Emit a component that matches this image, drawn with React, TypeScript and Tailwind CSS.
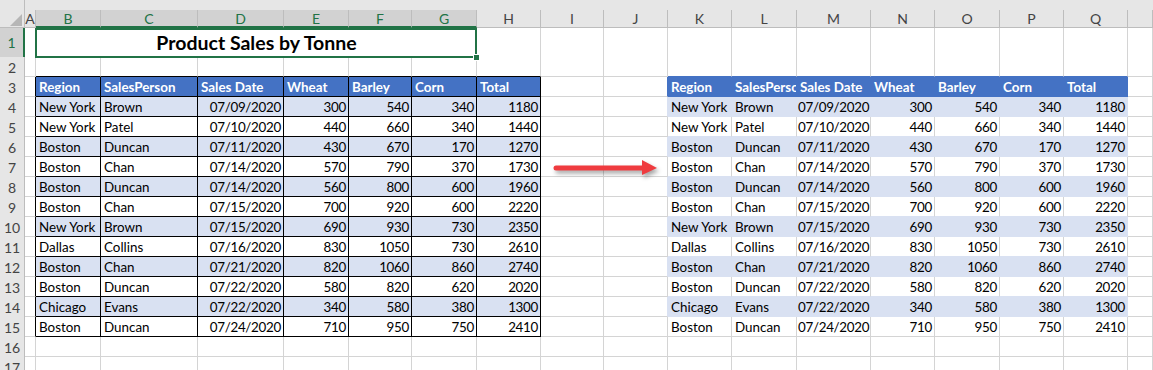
import React from 'react';

const GRID =
  'grid grid-cols-[25px_11px_65px_97px_86px_65px_63px_65px_64px_63px_64px_64px_65px_74px_64px_65px_64px_64px_25px]';

const LETTERS = ['A', 'B', 'C', 'D', 'E', 'F', 'G', 'H', 'I', 'J', 'K', 'L', 'M', 'N', 'O', 'P', 'Q', ''];

const HEAD = ['Region', 'SalesPerson', 'Sales Date', 'Wheat', 'Barley', 'Corn', 'Total'];

const DATA: (string | number)[][] = [
  ['New York', 'Brown', '07/09/2020', 300, 540, 340, 1180],
  ['New York', 'Patel', '07/10/2020', 440, 660, 340, 1440],
  ['Boston', 'Duncan', '07/11/2020', 430, 670, 170, 1270],
  ['Boston', 'Chan', '07/14/2020', 570, 790, 370, 1730],
  ['Boston', 'Duncan', '07/14/2020', 560, 800, 600, 1960],
  ['Boston', 'Chan', '07/15/2020', 700, 920, 600, 2220],
  ['New York', 'Brown', '07/15/2020', 690, 930, 730, 2350],
  ['Dallas', 'Collins', '07/16/2020', 830, 1050, 730, 2610],
  ['Boston', 'Chan', '07/21/2020', 820, 1060, 860, 2740],
  ['Boston', 'Duncan', '07/22/2020', 580, 820, 620, 2020],
  ['Chicago', 'Evans', '07/22/2020', 340, 580, 380, 1300],
  ['Boston', 'Duncan', '07/24/2020', 710, 950, 750, 2410],
];

const GRIDLINE = '#d4d4d4';
const HEAD_FILL = '#4472c4';
const BAND_FILL = '#d9e1f2';

// table column offset: left table starts at B (1), right one at K (10)
const tableCol = (c: number) => (c >= 1 && c <= 7 ? c - 1 : c >= 10 && c <= 16 ? c - 10 : -1);
const inTable = (r: number, c: number) => r >= 3 && r <= 15 && tableCol(c) >= 0;
const inLeft = (r: number, c: number) => r >= 3 && r <= 15 && c >= 1 && c <= 7;

const fillOf = (r: number, c: number): string | null => {
  if (!inTable(r, c)) return null;
  if (r === 3) return HEAD_FILL;
  return r % 2 === 0 ? BAND_FILL : null;
};

const valueOf = (r: number, c: number): string | number | null => {
  if (!inTable(r, c)) return null;
  const tc = tableCol(c);
  if (r === 3) return HEAD[tc];
  return DATA[r - 4][tc];
};

function Cell({ r, c }: { r: number; c: number }) {
  const fill = fillOf(r, c);
  const value = valueOf(r, c);

  let right = GRIDLINE;
  if (inLeft(r, c) || inLeft(r, c + 1)) right = '#000';
  else if (fill) right = fill;
  else if (fillOf(r, c + 1)) right = fillOf(r, c + 1)!;

  let bottom = GRIDLINE;
  if (inLeft(r, c) || inLeft(r + 1, c)) bottom = '#000';
  else if (fill) bottom = fill;
  else if (fillOf(r + 1, c)) bottom = fillOf(r + 1, c)!;

  const isHead = r === 3;
  const alignRight = !isHead && tableCol(c) >= 2;

  return (
    <div
      className={`h-[20px] overflow-hidden whitespace-nowrap border-r border-b text-[13.4px] leading-[20px] ${
        isHead ? 'font-bold text-white' : 'text-black'
      } ${alignRight ? 'pr-[2px] pl-[1px] text-right tracking-[-0.3px]' : 'px-[3px] text-left'}`}
      style={{ backgroundColor: fill ?? '#fff', borderRightColor: right, borderBottomColor: bottom }}
    >
      {value}
    </div>
  );
}

function RowHeader({ n, selected }: { n: number; selected?: boolean }) {
  return (
    <div
      className={`flex items-center justify-center border-b border-[#c8c8c8] text-[14px] ${
        selected
          ? 'border-r-2 border-r-[#217346] bg-[#d2d2d2] text-[#217346]'
          : 'border-r border-r-[#bdbdbd] bg-[#e6e6e6] text-[#444]'
      }`}
    >
      {n}
    </div>
  );
}

export default function App() {
  const rows = Array.from({ length: 16 }, (_, i) => i + 2);

  return (
    <div className="relative h-[370px] w-[1153px] overflow-hidden bg-white font-['Lato',_'Liberation_Sans',_sans-serif]">
      {/* column headers */}
      <div className={`${GRID} h-[28px] bg-[#e6e6e6]`}>
        <div className="relative border-r border-b border-[#bdbdbd]">
          <svg className="absolute left-[10px] top-[14px]" width="13" height="12" viewBox="0 0 13 12">
            <polygon points="12,0 12,12 0,12" fill="#b6b6b6" />
          </svg>
        </div>
        {LETTERS.map((l, i) => {
          const sel = i >= 1 && i <= 6;
          return (
            <div key={i} className="flex flex-col">
              <div className="h-[10px]" />
              <div
                className={`flex h-[18px] items-center justify-center border-r border-[#bdbdbd] text-[14px] ${
                  sel
                    ? 'border-b-2 border-b-[#217346] bg-[#d2d2d2] text-[#217346]'
                    : 'border-b border-b-[#bdbdbd] text-[#444]'
                }`}
              >
                {l}
              </div>
            </div>
          );
        })}
      </div>

      {/* row 1 with merged title */}
      <div className={`${GRID} h-[29px]`}>
        <RowHeader n={1} selected />
        <div className="border-r border-b border-[#d4d4d4]" />
        <div className="relative col-span-6 flex items-center justify-center border-b border-[#d4d4d4] text-[19.5px] font-bold text-black">
          Product Sales by Tonne
          <div className="pointer-events-none absolute -left-[1px] top-0 right-0 -bottom-[1px] border-2 border-[#217346]" />
          <div className="absolute -right-[3px] -bottom-[4px] h-[7px] w-[7px] border border-white bg-[#217346]" />
        </div>
        {LETTERS.slice(7).map((_, i) => (
          <div key={i} className="border-r border-b border-[#d4d4d4]" />
        ))}
      </div>

      {rows.map((r) => (
        <div key={r} className={`${GRID} h-[20px]`}>
          <RowHeader n={r} />
          {LETTERS.map((_, c) => (
            <Cell key={c} r={r} c={c} />
          ))}
        </div>
      ))}

      {/* arrow between the tables */}
      <svg
        className="absolute left-[550px] top-[156px] drop-shadow-[2px_3px_2px_rgba(0,0,0,0.35)]"
        width="112"
        height="24"
        viewBox="0 0 112 24"
      >
        <path d="M6 9.5 H94 V14.5 H6 A2.5 2.5 0 0 1 6 9.5 Z" fill="#ef3b3f" />
        <polygon points="92,4 107,12 92,19" fill="#ef3b3f" />
      </svg>
    </div>
  );
}
